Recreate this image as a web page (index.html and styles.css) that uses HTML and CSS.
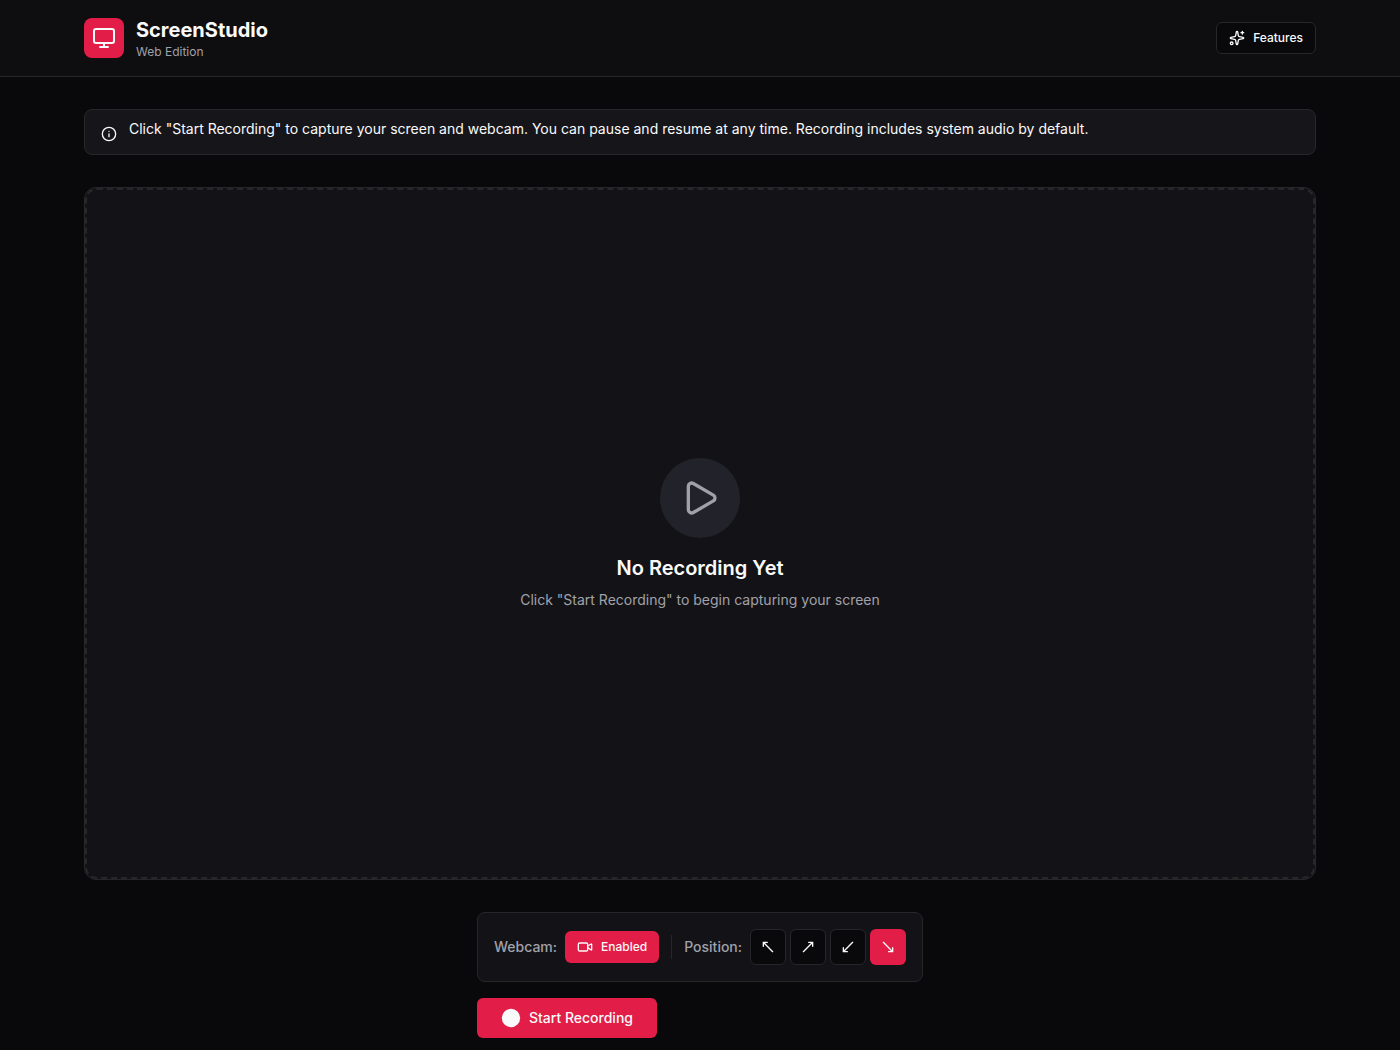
FILE: index.html
```
<!DOCTYPE html>
<html lang="en">
<head>
    <meta charset="UTF-8">
    <meta name="viewport" content="width=device-width, initial-scale=1.0">
    <title>ScreenStudio</title>
    <link rel="stylesheet" href="styles.css">
</head>
<body>
    <header class="header">
        <div class="container header-inner">
            <div class="brand">
                <div class="logo">
                    <svg class="icon icon-lg" viewBox="0 0 24 24"><rect width="20" height="14" x="2" y="3" rx="2"/><path d="M8 21h8M12 17v4"/></svg>
                </div>
                <div>
                    <h1>ScreenStudio</h1>
                    <p class="edition">Web Edition</p>
                </div>
            </div>
            <button type="button" class="btn btn-outline">
                <svg class="icon" viewBox="0 0 24 24"><path d="M11.017 2.814a1 1 0 0 1 1.966 0l1.051 5.558a2 2 0 0 0 1.594 1.594l5.558 1.051a1 1 0 0 1 0 1.966l-5.558 1.051a2 2 0 0 0-1.594 1.594l-1.051 5.558a1 1 0 0 1-1.966 0l-1.051-5.558a2 2 0 0 0-1.594-1.594l-5.558-1.051a1 1 0 0 1 0-1.966l5.558-1.051a2 2 0 0 0 1.594-1.594z"/><path d="M20 2v4M22 4h-4"/><circle cx="4" cy="20" r="2"/></svg>
                Features
            </button>
        </div>
    </header>

    <main class="container main">
        <div class="notice" role="alert">
            <svg class="icon" viewBox="0 0 24 24"><circle cx="12" cy="12" r="10"/><path d="M12 16v-4M12 8h.01"/></svg>
            <p>Click "Start Recording" to capture your screen and webcam. You can pause and resume at any time. Recording includes system audio by default.</p>
        </div>

        <section class="preview">
            <div class="preview-empty">
                <div class="play">
                    <svg class="icon icon-xl" viewBox="0 0 24 24"><path d="M5 5a2 2 0 0 1 3.008-1.728l11.997 6.998a2 2 0 0 1 .003 3.458l-12 7A2 2 0 0 1 5 19z"/></svg>
                </div>
                <h2>No Recording Yet</h2>
                <p>Click "Start Recording" to begin capturing your screen</p>
            </div>
        </section>

        <div class="controls">
            <div class="panel">
                <div class="group">
                    <span class="label" id="webcam-label">Webcam:</span>
                    <button type="button" class="btn btn-primary" id="webcam" aria-pressed="true" aria-labelledby="webcam-label webcam">
                        <svg class="icon" viewBox="0 0 24 24"><path d="m16 13 5.223 3.482a.5.5 0 0 0 .777-.416V7.87a.5.5 0 0 0-.752-.432L16 10.5"/><rect x="2" y="6" width="14" height="12" rx="2"/></svg>
                        Enabled
                    </button>
                </div>
                <div class="separator"></div>
                <div class="group" role="group" aria-labelledby="position-label">
                    <span class="label" id="position-label">Position:</span>
                    <div class="positions">
                        <button type="button" class="btn btn-square btn-outline" aria-label="Top left">
                            <svg class="icon" viewBox="0 0 24 24"><path d="M5 11V5h6M5 5l14 14"/></svg>
                        </button>
                        <button type="button" class="btn btn-square btn-outline" aria-label="Top right">
                            <svg class="icon" viewBox="0 0 24 24"><path d="M13 5h6v6M19 5 5 19"/></svg>
                        </button>
                        <button type="button" class="btn btn-square btn-outline" aria-label="Bottom left">
                            <svg class="icon" viewBox="0 0 24 24"><path d="M11 19H5v-6M19 5 5 19"/></svg>
                        </button>
                        <button type="button" class="btn btn-square btn-primary" aria-label="Bottom right">
                            <svg class="icon" viewBox="0 0 24 24"><path d="M19 13v6h-6M5 5l14 14"/></svg>
                        </button>
                    </div>
                </div>
            </div>
            <button type="button" class="btn btn-primary btn-lg">
                <svg class="icon icon-md icon-filled" viewBox="0 0 24 24"><circle cx="12" cy="12" r="10"/></svg>
                Start Recording
            </button>
        </div>
    </main>
</body>
</html>
```

FILE: styles.css
```
* {
    box-sizing: border-box;
}
body {
    margin: 0;
    min-height: 100vh;
    background: #09090b;
    color: #fafafa;
    font-family: Inter, sans-serif;
    font-size: 14px;
    line-height: 20px;
}
h1, h2, p {
    margin: 0;
}

/* icons */
.icon {
    width: 16px;
    height: 16px;
    flex-shrink: 0;
    fill: none;
    stroke: currentColor;
    stroke-width: 2;
    stroke-linecap: round;
    stroke-linejoin: round;
}
.icon-md {
    width: 20px;
    height: 20px;
}
.icon-lg {
    width: 24px;
    height: 24px;
}
.icon-xl {
    width: 40px;
    height: 40px;
}
.icon-filled {
    fill: currentColor;
}

/* layout */
.container {
    max-width: 1280px;
    margin: 0 auto;
    padding: 0 24px;
}
.header {
    background: #0e0e10;
    border-bottom: 1px solid #27272a;
}
.header-inner {
    display: flex;
    align-items: center;
    justify-content: space-between;
    padding-top: 16px;
    padding-bottom: 16px;
}
.main {
    display: flex;
    flex-direction: column;
    gap: 32px;
    padding-top: 32px;
    padding-bottom: 32px;
}

.brand {
    display: flex;
    align-items: center;
    gap: 12px;
}
.logo {
    display: flex;
    align-items: center;
    justify-content: center;
    width: 40px;
    height: 40px;
    border-radius: 8px;
    background: #e11d48;
}
h1 {
    font-size: 20px;
    font-weight: 700;
    line-height: 28px;
}
.edition {
    color: #a1a1aa;
    font-size: 12px;
    line-height: 16px;
}

/* buttons */
.btn {
    display: inline-flex;
    align-items: center;
    justify-content: center;
    gap: 8px;
    height: 32px;
    padding: 0 12px;
    border: 0;
    border-radius: 6px;
    color: #fafafa;
    font-family: inherit;
    font-size: 12px;
    font-weight: 500;
    line-height: 16px;
    cursor: pointer;
}
.btn-outline {
    border: 1px solid #27272a;
    background: #09090b;
}
.btn-primary {
    background: #e11d48;
}
.btn-square {
    width: 36px;
    height: 36px;
    padding: 0;
}
.btn-lg {
    height: 40px;
    padding: 0 24px;
    font-size: 14px;
    line-height: 20px;
}

.notice {
    display: flex;
    gap: 12px;
    padding: 9px 16px 12px;
    border: 1px solid #27272a;
    border-radius: 8px;
    background: #16161a;
}
.notice .icon {
    margin-top: 7px;
}

/* recording preview */
.preview {
    display: flex;
    aspect-ratio: 16 / 9;
    overflow: hidden;
    border: 1px solid #27272a;
    border-radius: 12px;
    background: #131317;
}
.preview-empty {
    flex: 1;
    display: flex;
    flex-direction: column;
    align-items: center;
    justify-content: center;
    border: 2px dashed #27272a;
    border-radius: 12px;
    color: #a1a1aa;
    text-align: center;
}
.play {
    display: flex;
    align-items: center;
    justify-content: center;
    width: 80px;
    height: 80px;
    margin-bottom: 16px;
    border-radius: 50%;
    background: #22232a;
}
h2 {
    margin-bottom: 8px;
    color: #fafafa;
    font-size: 20px;
    font-weight: 600;
    line-height: 28px;
}

/* controls under the preview */
.controls {
    display: flex;
    flex-direction: column;
    align-items: flex-start;
    align-self: center;
    gap: 16px;
}
.panel {
    display: flex;
    align-items: center;
    gap: 12px;
    padding: 16px;
    border: 1px solid #27272a;
    border-radius: 8px;
    background: #131317;
}
.group {
    display: flex;
    align-items: center;
    gap: 8px;
}
.label {
    color: #a1a1aa;
    font-weight: 500;
}
.separator {
    width: 1px;
    height: 24px;
    background: #27272a;
}
.positions {
    display: flex;
    gap: 4px;
}
```
